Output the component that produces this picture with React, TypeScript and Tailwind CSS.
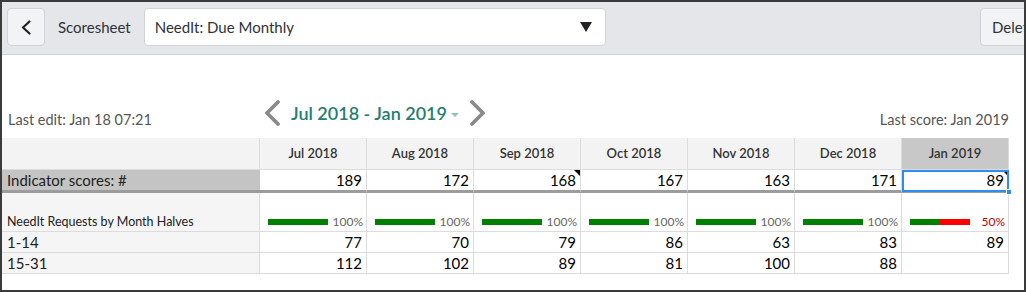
import React from 'react';

const months = ['Jul 2018', 'Aug 2018', 'Sep 2018', 'Oct 2018', 'Nov 2018', 'Dec 2018', 'Jan 2019'];
const scores = [189, 172, 168, 167, 163, 171, 89];
const firstHalf = [77, 70, 79, 86, 63, 83, 89];
const secondHalf: (number | null)[] = [112, 102, 89, 81, 100, 88, null];
const pct = [100, 100, 100, 100, 100, 100, 50];

const font = { fontFamily: 'Lato, "Noto Sans", sans-serif' };

const Chevron = ({ dir, className }: { dir: 'left' | 'right'; className?: string }) => (
  <svg viewBox="0 0 18 26" className={className}>
    <polyline
      points={dir === 'left' ? '15,2 4,13 15,24' : '3,2 14,13 3,24'}
      fill="none"
      stroke="#8a8a8a"
      strokeWidth="3.8"
      strokeLinecap="round"
      strokeLinejoin="round"
    />
  </svg>
);

const Corner = () => (
  <span className="absolute top-0 right-0 w-0 h-0 border-l-[6px] border-l-transparent border-t-[6px] border-t-black" />
);

export default function App() {
  return (
    <div style={font} className="w-[1026px] h-[292px] border-2 border-[#3b3b3b] bg-white overflow-hidden text-[#222]">
      {/* top bar */}
      <div className="h-[53px] bg-[#e4e6e9] border-b border-[#cfd2d6] flex items-start pt-[6px] pl-[5px]">
        <button className="w-[38px] h-[38px] rounded-[4px] border border-[#cfd2d6] bg-[#f2f3f4] flex items-center justify-center">
          <svg viewBox="0 0 10 15" className="w-[10px] h-[15px]">
            <polyline points="8.5,1.5 2,7.5 8.5,13.5" fill="none" stroke="#222" strokeWidth="2.2" strokeLinecap="round" strokeLinejoin="round" />
          </svg>
        </button>
        <span className="ml-[13px] text-[15px] leading-[38px] text-[#2e3338]">Scoresheet</span>
        <div className="ml-[13px] w-[462px] h-[38px] rounded-[4px] border border-[#cfd2d6] bg-white flex items-center pl-[10px] pr-[13px]">
          <span className="text-[15px] flex-1 text-[#2e3338]">NeedIt: Due Monthly</span>
          <span className="w-0 h-0 border-l-[6px] border-l-transparent border-r-[6px] border-r-transparent border-t-[10px] border-t-[#222]" />
        </div>
        <div className="flex-1" />
        <button className="h-[38px] w-[60px] -mr-[16px] rounded-l-[4px] border border-[#cfd2d6] bg-[#f2f3f4] text-[15px] text-left pl-[11px] text-[#2e3338] overflow-hidden whitespace-nowrap">
          Delete
        </button>
      </div>

      {/* period line */}
      <div className="h-[83px] flex items-end pb-[8px] pr-[15px]">
        <div className="w-[261px] pl-[6px] text-[14.5px] leading-[20px] text-[#555]">Last edit: Jan 18 07:21</div>
        <div className="flex items-center mb-[4px]">
          <Chevron dir="left" className="w-[18px] h-[26px]" />
          <span className="ml-[10px] text-[18px] font-semibold text-[#237e70] leading-[26px]">Jul 2018 - Jan 2019</span>
          <span className="ml-[4px] mt-[3px] w-0 h-0 border-l-[4px] border-l-transparent border-r-[4px] border-r-transparent border-t-[4px] border-t-[#8cc6bd]" />
          <Chevron dir="right" className="ml-[10px] w-[18px] h-[26px]" />
        </div>
        <div className="flex-1" />
        <div className="text-[14.5px] leading-[20px] text-[#555]">Last score: Jan 2019</div>
      </div>

      {/* sheet */}
      <div className="grid grid-cols-[258px_repeat(7,107px)] w-[1007px]">
        {/* header */}
        <div className="h-[32px] bg-[#f3f3f3] border-r border-b border-[#dcdcdc]" />
        {months.map((m, i) => (
          <div
            key={m}
            className={`h-[32px] border-r border-b border-[#dcdcdc] flex items-center justify-center text-[13px] font-semibold text-[#333] ${
              i === 6 ? 'bg-[#c8c8c8]' : 'bg-[#f3f3f3]'
            }`}
          >
            {m}
          </div>
        ))}

        {/* indicator scores */}
        <div className="h-[23px] bg-[#c4c4c4] border-b-[3px] border-[#9c9c9c] pl-[5px] text-[15px] leading-[20px] text-[#222]">
          Indicator scores: #
        </div>
        {scores.map((s, i) => (
          <div
            key={i}
            className="relative h-[23px] bg-white border-r border-r-[#dcdcdc] border-b-[3px] border-b-[#9c9c9c] text-right pr-[4px] text-[15px] leading-[20px] text-black"
          >
            {s}
            {(i === 2 || i === 6) && <Corner />}
            {i === 6 && (
              <>
                <span className="absolute left-0 top-0 right-[-1px] bottom-[-2px] border-2 border-[#2f8cf0]" />
                <span className="absolute right-[-4px] bottom-[-5px] w-[6px] h-[6px] bg-[#2f8cf0] border border-white" />
              </>
            )}
          </div>
        ))}

        {/* requests by month halves */}
        <div className="h-[39px] bg-[#f5f5f5] border-r border-b border-[#dcdcdc] flex items-end pl-[5px] pb-0 text-[12.5px] leading-[18px] text-[#222]">
          NeedIt Requests by Month Halves
        </div>
        {pct.map((p, i) => (
          <div key={i} className="h-[39px] bg-white border-r border-b border-[#dcdcdc] flex items-end pb-[1px] pl-[8px] pr-[3px]">
            <div className="flex items-center w-full">
              <div className="w-[60px] h-[6px] flex">
                <div className="h-full bg-[#008000]" style={{ width: `${p}%` }} />
                <div className="h-full flex-1 bg-[#ff0000]" />
              </div>
              <div className="flex-1" />
              <span className={`text-[12px] leading-[16px] ${p < 100 ? 'text-[#c00000]' : 'text-[#666]'}`}>{p}%</span>
            </div>
          </div>
        ))}

        {/* 1-14 */}
        <div className="h-[21px] bg-[#f5f5f5] border-r border-b border-[#dcdcdc] pl-[5px] text-[15px] leading-[20px]">1-14</div>
        {firstHalf.map((v, i) => (
          <div key={i} className="h-[21px] bg-white border-r border-b border-[#dcdcdc] text-right pr-[4px] text-[15px] leading-[20px] text-black">
            {v}
          </div>
        ))}

        {/* 15-31 */}
        <div className="h-[21px] bg-[#f5f5f5] border-r border-b border-[#dcdcdc] pl-[5px] text-[15px] leading-[20px]">15-31</div>
        {secondHalf.map((v, i) => (
          <div key={i} className="h-[21px] bg-white border-r border-b border-[#dcdcdc] text-right pr-[4px] text-[15px] leading-[20px] text-black">
            {v ?? ''}
          </div>
        ))}
      </div>
    </div>
  );
}
